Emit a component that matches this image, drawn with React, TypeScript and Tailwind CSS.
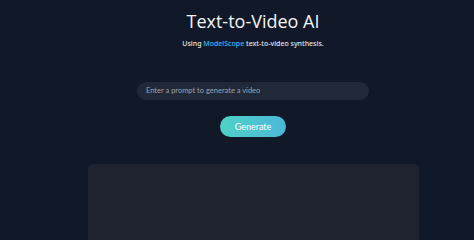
export default function App() {
  return (
    <div className="h-screen w-full overflow-hidden bg-[#111827] flex flex-col items-center pl-[32px] [&>*]:shrink-0">
      {/* Header */}
      <h1 className="mt-[9px] text-[18px] leading-[24px] text-[#f3f4f6] font-['Open_Sans',sans-serif]">
        Text-to-Video AI
      </h1>
      <p className="mt-[5px] text-[7px] leading-[12px] font-medium text-[#e5e7eb] font-['Noto_Sans',sans-serif]">
        Using <span className="text-[#38bdf8]">ModelScope</span> text-to-video synthesis.
      </p>

      {/* Prompt */}
      <div className="mt-[32px] w-[232px] h-[18px] rounded-full bg-[#1f2937] flex items-center px-[9px]">
        <input
          className="w-full bg-transparent outline-none text-[7.5px] text-[#e5e7eb] placeholder:text-[#9ca3af] font-['Lato',sans-serif]"
          placeholder="Enter a prompt to generate a video"
        />
      </div>

      <button className="mt-[16px] w-[66px] h-[21px] rounded-full bg-gradient-to-r from-[#4fd1c5] to-[#4cb8d8] text-white text-[9px] font-['Lato',sans-serif]">
        Generate
      </button>

      {/* Video area */}
      <div className="mt-[27px] w-[331px] h-[120px] rounded-[5px] bg-[#1f2330]" />
    </div>
  );
}
